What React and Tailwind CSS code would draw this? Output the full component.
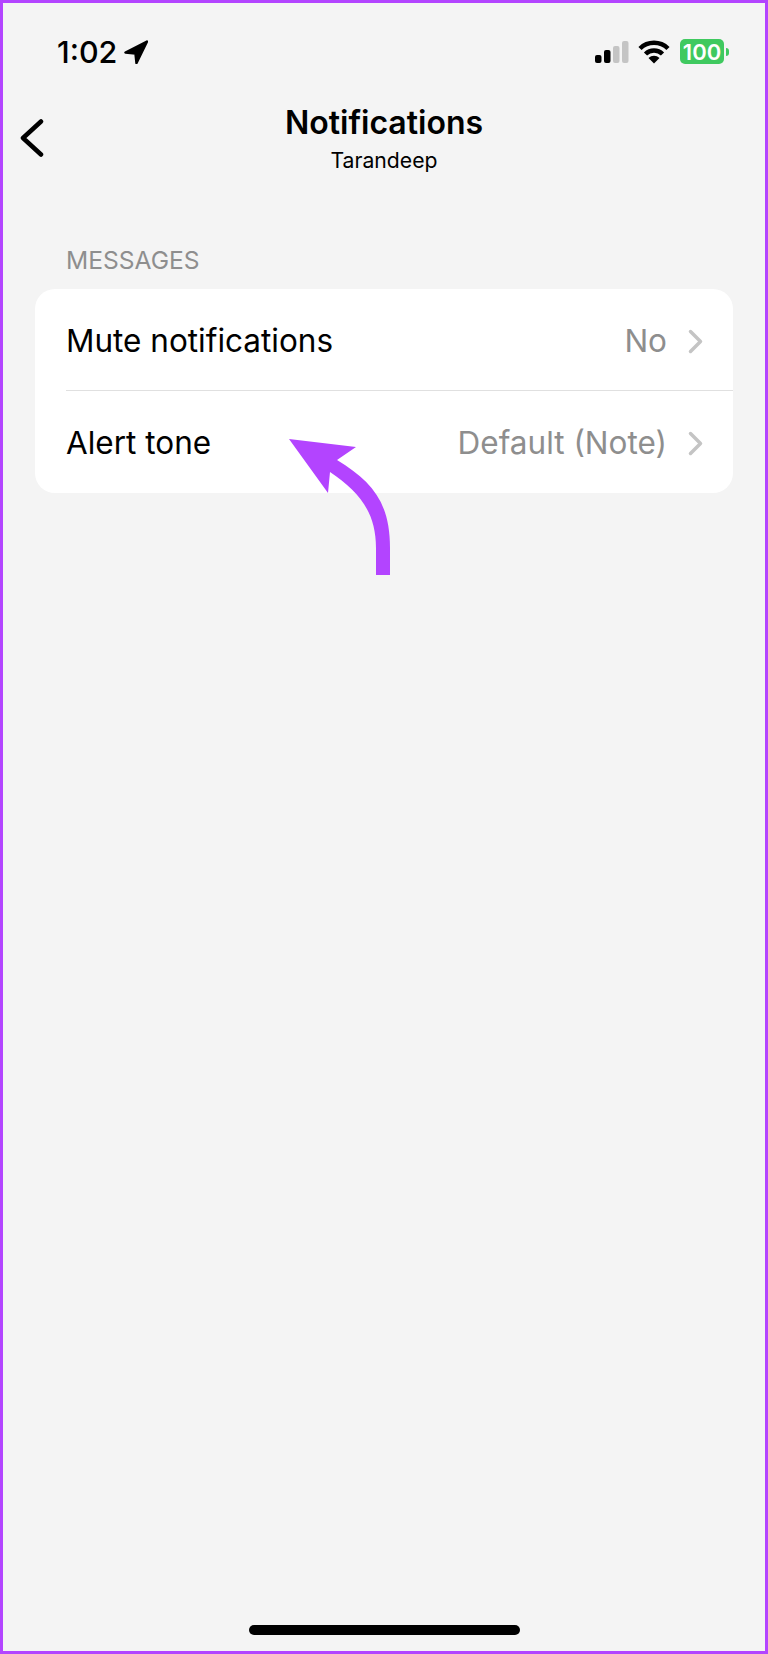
import React from "react";

const StatusIcons = () => (
  <div className="mb-[3px] flex items-center">
    <svg width="34" height="24" viewBox="0 0 34 24" className="mr-[9px]">
      <rect x="0" y="15" width="6.5" height="8" rx="2" fill="#000" />
      <rect x="9" y="10" width="6.5" height="13" rx="2" fill="#000" />
      <rect x="18" y="6" width="6.5" height="17" rx="2" fill="#c4c4c4" />
      <rect x="27" y="1" width="6.5" height="22" rx="2" fill="#c4c4c4" />
    </svg>
    <svg width="32" height="24" viewBox="0 0 32 24" className="mr-[10px]">
      <path d="M2 8.5 A20 20 0 0 1 30 8.5" fill="none" stroke="#000" strokeWidth="4.5" />
      <path d="M7.5 14 A12 12 0 0 1 24.5 14" fill="none" stroke="#000" strokeWidth="4.5" />
      <path d="M16 23.5 L10.5 18 A8 8 0 0 1 21.5 18 Z" fill="#000" />
    </svg>
    <div className="flex items-center">
      <div className="flex h-[25px] w-[44px] items-center justify-center rounded-[5px] bg-[#3fc95f] text-[22px] font-semibold leading-none text-white">
        100
      </div>
      <div className="ml-[2px] h-[8px] w-[3px] rounded-r-full bg-[#3fc95f]" />
    </div>
  </div>
);

const Row = ({ label, value, divider }) => (
  <div className="relative flex h-[102px] items-center justify-between pl-[31px] pr-[30px] pt-[2px]">
    <span className="text-[31.5px] leading-none text-black">{label}</span>
    <div className="flex items-center gap-[21px]">
      <span className="text-[31.5px] leading-none text-[#8e8e8e]">{value}</span>
      <svg width="15" height="25" viewBox="0 0 15 25">
        <path d="M2.5 2.5 L12.5 12.5 L2.5 22.5" fill="none" stroke="#c4c4c4" strokeWidth="3.5" strokeLinecap="round" strokeLinejoin="round" />
      </svg>
    </div>
    {divider && <div className="absolute bottom-0 left-[31px] right-0 h-px bg-[#e0e0e0]" />}
  </div>
);

export default function App() {
  return (
    <div className="relative flex h-[1654px] w-[768px] flex-col border-[3px] border-[#b344ff] bg-[#f4f4f4] font-['Inter',sans-serif]">
      {/* status bar */}
      <div className="flex h-[64px] items-end justify-between pl-[54px] pr-[36px]">
        <div className="flex items-center gap-[7px]">
          <span className="text-[30.5px] font-medium leading-[30px] text-black">1:02</span>
          <svg width="24" height="24" viewBox="0 0 24 24">
            <path d="M23 1.5 L1.5 12.5 L11.5 13.5 L12.5 23 Z" fill="#000" stroke="#000" strokeWidth="2.5" strokeLinejoin="round" />
          </svg>
        </div>
        <StatusIcons />
      </div>

      {/* nav */}
      <div className="relative mt-[41px] flex flex-col items-center">
        <svg width="26" height="40" viewBox="0 0 26 40" className="absolute left-[16px] top-[11px]">
          <path d="M22 2.5 L4 19 L22 35.5" fill="none" stroke="#000" strokeWidth="4.5" strokeLinecap="round" strokeLinejoin="round" />
        </svg>
        <h1 className="text-[32px] font-semibold leading-[30px] text-black">Notifications</h1>
        <p className="mt-[10px] text-[21.2px] leading-[24px] text-black">Tarandeep</p>
      </div>

      {/* messages */}
      <p className="mb-[17px] ml-[63px] mt-[76px] text-[24.6px] leading-[24px] text-[#8e8e8e]">MESSAGES</p>
      <div className="ml-[32px] mr-[32px] overflow-hidden rounded-[20px] bg-white">
        <Row label="Mute notifications" value="No" divider />
        <Row label="Alert tone" value="Default (Note)" />
      </div>

      {/* arrow annotation */}
      <svg width="110" height="145" viewBox="0 0 110 145" className="absolute left-[283px] top-[433px]">
        <path
          d="M3 3 L70 11 L51 24 C85 45 104 65 104 112 L104 139 L90 139 L90 112 C90 75 72 55 44 36 L42 57 Z"
          fill="#b344ff"
        />
      </svg>

      {/* home indicator */}
      <div className="absolute bottom-[16px] left-[246px] h-[10px] w-[271px] rounded-full bg-black" />
    </div>
  );
}
